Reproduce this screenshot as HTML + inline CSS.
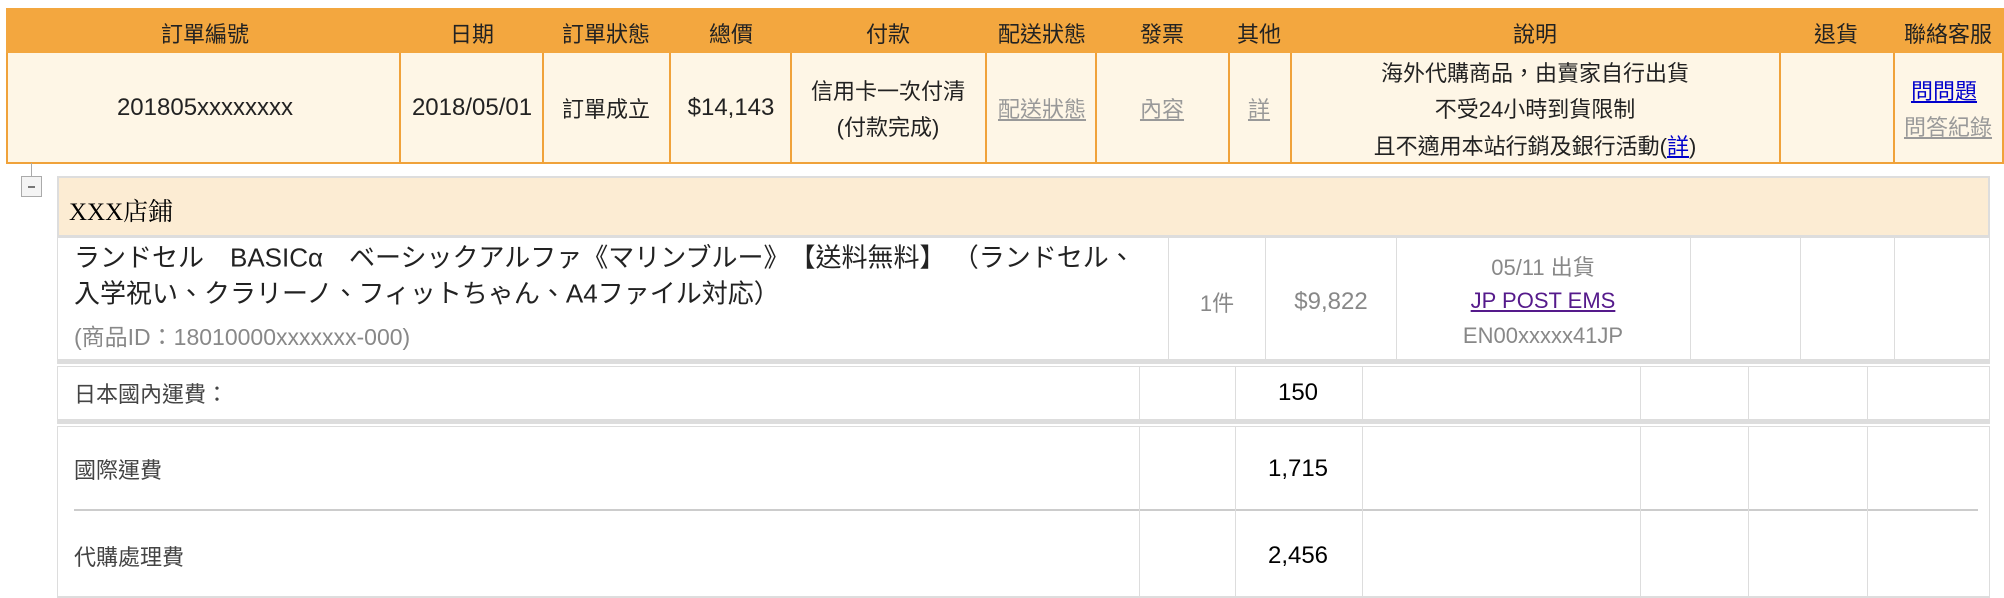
<!DOCTYPE html>
<html><head><meta charset="utf-8"><style>
body{margin:0;width:2004px;height:598px;background:#fff;position:relative;overflow:hidden;font-family:"Liberation Sans","Noto Sans CJK TC",sans-serif;color:#222;font-size:22px}
div{box-sizing:border-box}
.a{position:absolute}
.t{position:absolute;white-space:nowrap;transform:translate(-50%,-50%);text-align:center}
.l{position:absolute;white-space:nowrap;transform:translateY(-50%)}
.vl{position:absolute;width:2px;background:#f0a23a}
.gl{position:absolute;width:1px;background:#ddd}
.gray{color:#999;text-decoration:underline}
.g{color:#888}
.n{font-size:24px}
</style></head><body>
<div class="a" style="left:6px;top:8px;width:1998px;height:45px;background:#f3a73f"></div>
<div class="a" style="left:6px;top:53px;width:1998px;height:111px;background:#fef6e6;border:2px solid #f0a23a;border-top:none"></div>
<div class="vl" style="left:399px;top:53px;height:110px"></div>
<div class="vl" style="left:542px;top:53px;height:110px"></div>
<div class="vl" style="left:669px;top:53px;height:110px"></div>
<div class="vl" style="left:790px;top:53px;height:110px"></div>
<div class="vl" style="left:985px;top:53px;height:110px"></div>
<div class="vl" style="left:1095px;top:53px;height:110px"></div>
<div class="vl" style="left:1228px;top:53px;height:110px"></div>
<div class="vl" style="left:1290px;top:53px;height:110px"></div>
<div class="vl" style="left:1779px;top:53px;height:110px"></div>
<div class="vl" style="left:1893px;top:53px;height:110px"></div>
<div class="t" style="left:205px;top:33px">訂單編號</div>
<div class="t" style="left:472px;top:33px">日期</div>
<div class="t" style="left:606px;top:33px">訂單狀態</div>
<div class="t" style="left:731px;top:33px">總價</div>
<div class="t" style="left:888px;top:33px">付款</div>
<div class="t" style="left:1042px;top:33px">配送狀態</div>
<div class="t" style="left:1162px;top:33px">發票</div>
<div class="t" style="left:1259px;top:33px">其他</div>
<div class="t" style="left:1535px;top:33px">說明</div>
<div class="t" style="left:1836px;top:33px">退貨</div>
<div class="t" style="left:1948px;top:33px">聯絡客服</div>
<div class="t n" style="left:205px;top:108px">201805xxxxxxxx</div>
<div class="t n" style="left:472px;top:108px">2018/05/01</div>
<div class="t" style="left:606px;top:108px">訂單成立</div>
<div class="t n" style="left:731px;top:108px">$14,143</div>
<div class="t" style="left:888px;top:90px">信用卡一次付清</div>
<div class="t" style="left:888px;top:126px">(付款完成)</div>
<div class="t gray" style="left:1042px;top:108px">配送狀態</div>
<div class="t gray" style="left:1162px;top:108px">內容</div>
<div class="t gray" style="left:1259px;top:108px">詳</div>
<div class="t" style="left:1535px;top:72px">海外代購商品，由賣家自行出貨</div>
<div class="t" style="left:1535px;top:108px">不受24小時到貨限制</div>
<div class="t" style="left:1535px;top:145px">且不適用本站行銷及銀行活動(<span style="color:#00c;text-decoration:underline">詳</span>)</div>
<div class="t" style="left:1944px;top:90px;color:#00c;text-decoration:underline">問問題</div>
<div class="t gray" style="left:1948px;top:126px">問答紀錄</div>
<div class="a" style="left:31px;top:163px;width:1px;height:13px;background:#aaa"></div>
<div class="a" style="left:21px;top:176px;width:21px;height:21px;border:1px solid #aaa;background:#f4f4f4"><div class="a" style="left:6px;top:9px;width:7px;height:2px;background:#777"></div></div>
<div class="a" style="left:57px;top:176px;width:1933px;height:62px;background:#fcecd3;border:2px solid #ddd;border-bottom:3px solid #ddd"></div>
<div class="l" style="left:69px;top:210px;font-family:'Liberation Serif','Noto Serif CJK SC',serif;font-size:25px;color:#000">XXX店鋪</div>
<div class="a" style="left:57px;top:238px;width:1933px;height:126px;border-left:1px solid #ddd;border-right:1px solid #ddd;border-bottom:5px solid #ddd"></div>
<div class="gl" style="left:1168px;top:238px;height:122px"></div>
<div class="gl" style="left:1265px;top:238px;height:122px"></div>
<div class="gl" style="left:1396px;top:238px;height:122px"></div>
<div class="gl" style="left:1690px;top:238px;height:122px"></div>
<div class="gl" style="left:1800px;top:238px;height:122px"></div>
<div class="gl" style="left:1894px;top:238px;height:122px"></div>
<div class="l" style="left:74px;top:256px;font-size:26px">ランドセル　BASICα　ベーシックアルファ《マリンブルー》　【送料無料】 （ランドセル、</div>
<div class="l" style="left:74px;top:292px;font-size:26px">入学祝い、クラリーノ、フィットちゃん、A4ファイル対応）</div>
<div class="l g" style="left:74px;top:335px;font-size:23px">(商品ID：18010000xxxxxxx-000)</div>
<div class="t g" style="left:1217px;top:302px">1件</div>
<div class="t g n" style="left:1331px;top:302px">$9,822</div>
<div class="t g" style="left:1543px;top:266px">05/11 出貨</div>
<div class="t" style="left:1543px;top:301px;color:#551a8b;text-decoration:underline">JP POST EMS</div>
<div class="t g" style="left:1543px;top:336px">EN00xxxxx41JP</div>
<div class="a" style="left:57px;top:366px;width:1933px;height:58px;border:1px solid #ddd;border-bottom:5px solid #ddd"></div>
<div class="a" style="left:57px;top:426px;width:1933px;height:172px;border:1px solid #ddd;border-bottom:2px solid #ddd"></div>
<div class="a" style="left:74px;top:509px;width:1904px;height:2px;background:#ccc"></div>
<div class="gl" style="left:1139px;top:366px;height:53px"></div>
<div class="gl" style="left:1235px;top:366px;height:53px"></div>
<div class="gl" style="left:1362px;top:366px;height:53px"></div>
<div class="gl" style="left:1640px;top:366px;height:53px"></div>
<div class="gl" style="left:1748px;top:366px;height:53px"></div>
<div class="gl" style="left:1867px;top:366px;height:53px"></div>
<div class="gl" style="left:1139px;top:426px;height:170px"></div>
<div class="gl" style="left:1235px;top:426px;height:170px"></div>
<div class="gl" style="left:1362px;top:426px;height:170px"></div>
<div class="gl" style="left:1640px;top:426px;height:170px"></div>
<div class="gl" style="left:1748px;top:426px;height:170px"></div>
<div class="gl" style="left:1867px;top:426px;height:170px"></div>
<div class="l" style="left:74px;top:393px;color:#444">日本國內運費：</div>
<div class="t n" style="left:1298px;top:393px;color:#000">150</div>
<div class="l" style="left:74px;top:469px;color:#444">國際運費</div>
<div class="t n" style="left:1298px;top:469px;color:#000">1,715</div>
<div class="l" style="left:74px;top:556px;color:#444">代購處理費</div>
<div class="t n" style="left:1298px;top:556px;color:#000">2,456</div>
</body></html>
